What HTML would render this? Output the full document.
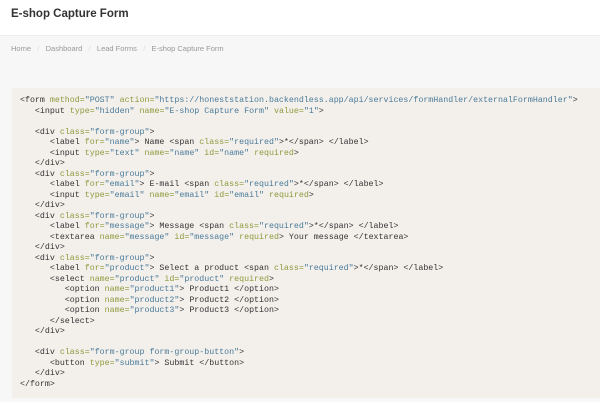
<!DOCTYPE html><html><head><style>
body{margin:0;width:600px;height:402px;background:#f7f7f7;font-family:"Liberation Sans",sans-serif;overflow:hidden;position:relative}
.hd{position:absolute;left:0;top:0;width:600px;height:35px;background:#fff;border-bottom:1px solid #eee}
.hd b{position:absolute;left:11px;top:8px;font-size:11.5px;color:#333}
.bc{position:absolute;left:11px;top:44px;font-size:7.5px;color:#999;white-space:pre}
.bc i{color:#ddd;font-style:normal}
.code{position:absolute;left:12px;top:88px;width:588px;height:310px;background:#f3f0ec}
pre{margin:0;position:absolute;left:8px;top:8px;font-family:"Liberation Mono",monospace;font-size:8.3px;line-height:10.5px;color:#333}
.a{color:#8c9a3c}.v{color:#4a7a98}
</style></head><body>
<div class="hd"><b>E-shop Capture Form</b></div>
<div class="bc">Home   <i>/</i>   Dashboard   <i>/</i>   Lead Forms   <i>/</i>   E-shop Capture Form</div>
<div class="code"><pre>&lt;form <span class="a">method=</span><span class="v">"POST"</span> <span class="a">action=</span><span class="v">"https://honeststation.backendless.app/api/services/formHandler/externalFormHandler"</span>&gt;
   &lt;input <span class="a">type=</span><span class="v">"hidden"</span> <span class="a">name=</span><span class="v">"E-shop Capture Form"</span> <span class="a">value=</span><span class="v">"1"</span>&gt;

   &lt;div <span class="a">class=</span><span class="v">"form-group"</span>&gt;
      &lt;label <span class="a">for=</span><span class="v">"name"</span>&gt; Name &lt;span <span class="a">class=</span><span class="v">"required"</span>&gt;*&lt;/span&gt; &lt;/label&gt;
      &lt;input <span class="a">type=</span><span class="v">"text"</span> <span class="a">name=</span><span class="v">"name"</span> <span class="a">id=</span><span class="v">"name"</span> <span class="a">required</span>&gt;
   &lt;/div&gt;
   &lt;div <span class="a">class=</span><span class="v">"form-group"</span>&gt;
      &lt;label <span class="a">for=</span><span class="v">"email"</span>&gt; E-mail &lt;span <span class="a">class=</span><span class="v">"required"</span>&gt;*&lt;/span&gt; &lt;/label&gt;
      &lt;input <span class="a">type=</span><span class="v">"email"</span> <span class="a">name=</span><span class="v">"email"</span> <span class="a">id=</span><span class="v">"email"</span> <span class="a">required</span>&gt;
   &lt;/div&gt;
   &lt;div <span class="a">class=</span><span class="v">"form-group"</span>&gt;
      &lt;label <span class="a">for=</span><span class="v">"message"</span>&gt; Message &lt;span <span class="a">class=</span><span class="v">"required"</span>&gt;*&lt;/span&gt; &lt;/label&gt;
      &lt;textarea <span class="a">name=</span><span class="v">"message"</span> <span class="a">id=</span><span class="v">"message"</span> <span class="a">required</span>&gt; Your message &lt;/textarea&gt;
   &lt;/div&gt;
   &lt;div <span class="a">class=</span><span class="v">"form-group"</span>&gt;
      &lt;label <span class="a">for=</span><span class="v">"product"</span>&gt; Select a product &lt;span <span class="a">class=</span><span class="v">"required"</span>&gt;*&lt;/span&gt; &lt;/label&gt;
      &lt;select <span class="a">name=</span><span class="v">"product"</span> <span class="a">id=</span><span class="v">"product"</span> <span class="a">required</span>&gt;
         &lt;option <span class="a">name=</span><span class="v">"product1"</span>&gt; Product1 &lt;/option&gt;
         &lt;option <span class="a">name=</span><span class="v">"product2"</span>&gt; Product2 &lt;/option&gt;
         &lt;option <span class="a">name=</span><span class="v">"product3"</span>&gt; Product3 &lt;/option&gt;
      &lt;/select&gt;
   &lt;/div&gt;

   &lt;div <span class="a">class=</span><span class="v">"form-group form-group-button"</span>&gt;
      &lt;button <span class="a">type=</span><span class="v">"submit"</span>&gt; Submit &lt;/button&gt;
   &lt;/div&gt;
&lt;/form&gt;</pre></div>
</body></html>
